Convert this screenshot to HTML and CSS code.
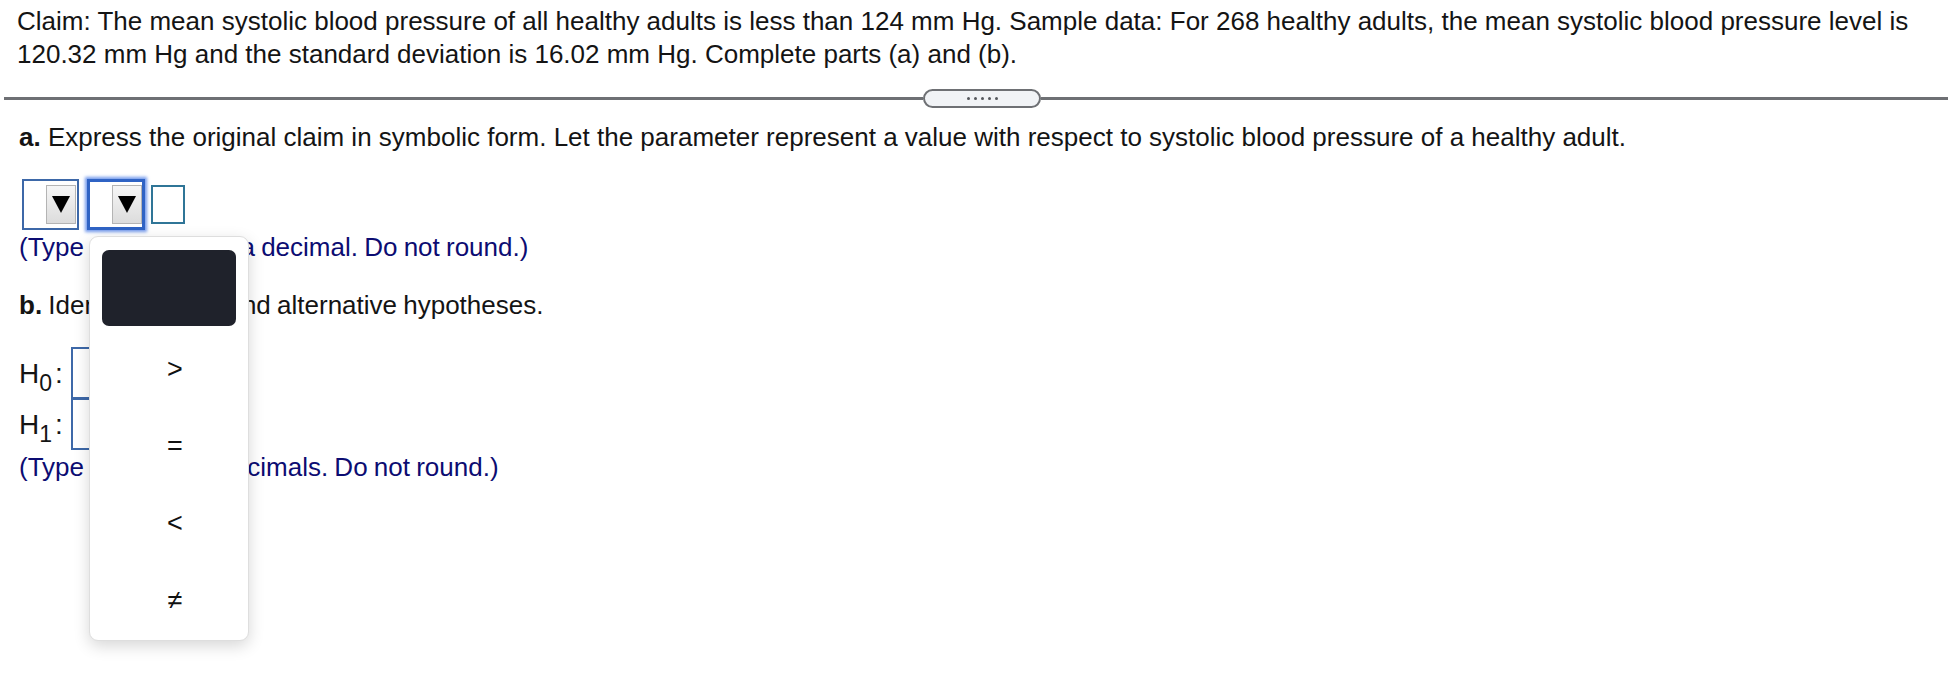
FILE: index.html
```html
<!DOCTYPE html>
<html lang="en">
<head>
<meta charset="utf-8">
<title>Hypothesis test</title>
<link rel="stylesheet" href="styles.css">
</head>
<body>
<div class="page">
  <p class="claim">Claim: The mean systolic blood pressure of all healthy adults is less than 124 mm Hg. Sample data: For 268 healthy adults, the mean systolic blood pressure level is 120.32 mm Hg and the standard deviation is 16.02 mm Hg. Complete parts (a) and (b).</p>

  <div class="divider">
    <span class="rule"></span>
    <span class="pill"><span class="dot"></span><span class="dot"></span><span class="dot"></span><span class="dot"></span><span class="dot"></span></span>
    <span class="rule"></span>
  </div>

  <p class="line part-a"><b>a.</b> Express the original claim in symbolic form. Let the parameter represent a value with respect to systolic blood pressure of a healthy adult.</p>

  <div class="answer-row">
    <div class="select"><span class="btn"><span class="tri"></span></span></div>
    <div class="select focused"><span class="btn"><span class="tri"></span></span></div>
    <div class="field"></div>
  </div>
  <p class="line hint">(Type an integer or a decimal. Do not round.)</p>

  <p class="line part-b"><b>b.</b> Identify the null and alternative hypotheses.</p>

  <div class="hyp">
    <div class="hyp-row"><span class="hlabel">H<sub>0</sub><span class="colon">:</span></span><span class="hbox"></span></div>
    <div class="hyp-row second"><span class="hlabel">H<sub>1</sub><span class="colon">:</span></span><span class="hbox"></span></div>
  </div>
  <p class="line hint">(Type integers or decimals. Do not round.)</p>

  <div class="menu">
    <div class="menu-head"></div>
    <div class="opts">
      <div class="opt">&gt;</div>
      <div class="opt">=</div>
      <div class="opt">&lt;</div>
      <div class="opt">&ne;</div>
    </div>
  </div>
</div>
</body>
</html>
```

FILE: styles.css
```css
html, body {
  margin: 0;
  padding: 0;
  background: #ffffff;
}

body {
  min-height: 684px;
}

.page {
  position: relative;
  min-height: 684px;
  font-family: "Liberation Sans", Arial, sans-serif;
  font-size: 26px;
  line-height: 33px;
  color: #141414;
  padding-top: 5px;
  box-sizing: border-box;
}

.claim {
  margin: 0;
  padding: 0 20px 0 17px;
}

.divider {
  display: flex;
  align-items: center;
  margin-top: 18px;
  padding-left: 4px;
  height: 19px;
}

.rule {
  flex: 1;
  height: 3px;
  background: #6e7074;
}

.rule:first-child {
  flex: 0 0 919px;
}

.pill {
  box-sizing: border-box;
  width: 118px;
  height: 19px;
  border: 2px solid #6e7074;
  border-radius: 10px;
  background: #f1f3f6;
  display: flex;
  align-items: center;
  justify-content: center;
  gap: 4px;
}

.dot {
  width: 3px;
  height: 3px;
  border-radius: 50%;
  background: #55585d;
}

.line {
  margin: 0;
  padding-left: 19px;
}

.part-a {
  margin-top: 13px;
}

.answer-row {
  display: flex;
  align-items: center;
  margin-top: 25px;
  padding-left: 22px;
  height: 51px;
}

.select {
  box-sizing: border-box;
  width: 57px;
  height: 51px;
  border: 2px solid #3d68a8;
  display: flex;
  align-items: center;
  justify-content: flex-end;
  padding-right: 1px;
}

.select.focused {
  width: 58px;
  margin-left: 8px;
  border: 3px solid #2f63c4;
  padding-right: 0;
  box-shadow: 0 0 3px 2px rgba(70, 120, 230, 0.75);
}

.btn {
  box-sizing: border-box;
  width: 30px;
  height: 39px;
  border: 1px solid #b4b4b4;
  background: linear-gradient(#f6f6f6, #dcdcdc);
  display: flex;
  align-items: center;
  justify-content: center;
}

.tri {
  width: 0;
  height: 0;
  border-left: 9px solid transparent;
  border-right: 9px solid transparent;
  border-top: 17px solid #000000;
}

.field {
  box-sizing: border-box;
  width: 34px;
  height: 39px;
  margin-left: 6px;
  border: 2px solid #2f7597;
}

.hint {
  color: #0c0c72;
  margin-top: 1px;
  word-spacing: -1px;
}

.part-b {
  margin-top: 25px;
  word-spacing: -1px;
}

.hyp {
  margin-top: 25px;
  padding-left: 19px;
}

.hyp-row {
  display: flex;
  align-items: center;
  height: 52px;
}

.hyp-row.second {
  height: 51px;
}

.hlabel {
  width: 52px;
  font-size: 28px;
  white-space: nowrap;
}

.hlabel sub {
  font-size: 23px;
  line-height: 0;
  vertical-align: -8px;
}

.colon {
  margin-left: 3px;
}

.hbox {
  box-sizing: border-box;
  width: 150px;
  height: 100%;
  border: 2px solid #3d68a8;
}

.hyp-row.second .hbox {
  border-top: 3px solid #3d68a8;
  margin-top: -2px;
  height: 53px;
}

.menu {
  position: absolute;
  left: 89px;
  top: 236px;
  box-sizing: border-box;
  width: 160px;
  height: 405px;
  padding: 13px 12px 0 12px;
  background: #ffffff;
  border: 1px solid #dedede;
  border-radius: 9px;
  box-shadow: 0 5px 16px rgba(0, 0, 0, 0.16);
}

.menu-head {
  height: 76px;
  border-radius: 7px;
  background: #1f222b;
}

.opts {
  padding-top: 5px;
  padding-left: 12px;
}

.opt {
  height: 77px;
  display: flex;
  align-items: center;
  justify-content: center;
  font-family: "Liberation Sans", Arial, sans-serif;
  font-size: 27px;
  color: #111111;
}
```
